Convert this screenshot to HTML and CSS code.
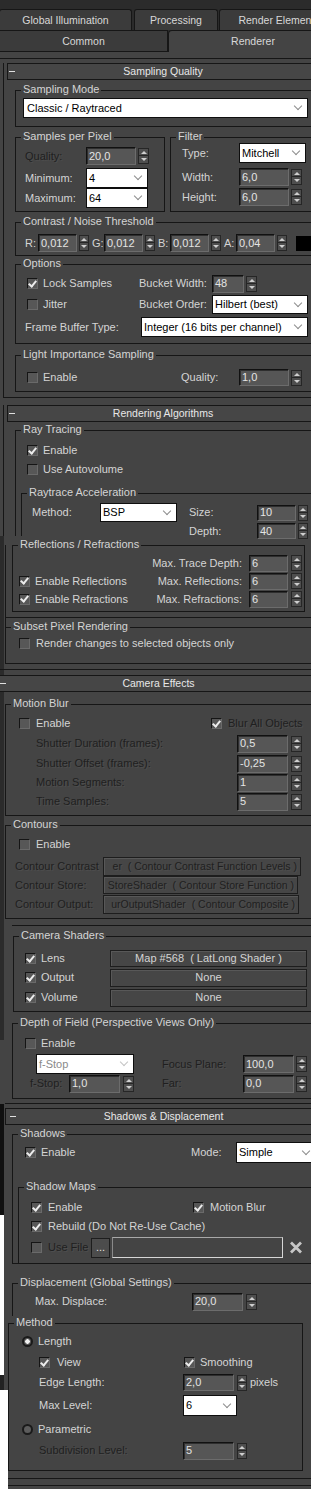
FILE: index.html
```html
<!DOCTYPE html>
<html lang="en">
<head>
    <meta charset="UTF-8">
    <meta name="viewport" content="width=device-width, initial-scale=1.0">
    <title>Render Setup - Renderer</title>
    <link rel="stylesheet" href="styles.css">
</head>
<body>
<div class="page">

    <!-- Tabs -->
    <div class="tabs">
        <div class="tab-row">
            <div class="tab t-gi">Global Illumination</div>
            <div class="tab t-proc">Processing</div>
            <div class="tab t-re">Render Elements</div>
        </div>
        <div class="tab-row">
            <div class="tab t-common">Common</div>
            <div class="tab t-renderer">Renderer</div>
        </div>
    </div>
    <div class="panel-line"></div>

    <!-- Sampling Quality -->
    <div class="roll r-sq">
        <div class="roll-head"><span class="dash"></span><span class="roll-title">Sampling Quality</span></div>

        <div class="grp open g-mode">
            <div class="grp-t">Sampling Mode</div>
            <div class="drop d-mode">Classic / Raytraced</div>
        </div>

        <div class="pair">
            <div class="grp g-spp">
                <div class="grp-t">Samples per Pixel</div>
                <div class="row r-quality">
                    <span class="lbl dis">Quality:</span>
                    <span class="field w50">20,0</span><span class="spin"></span>
                </div>
                <div class="row r-min">
                    <span class="lbl">Minimum:</span>
                    <span class="drop d-min">4</span>
                </div>
                <div class="row r-max">
                    <span class="lbl">Maximum:</span>
                    <span class="drop d-min">64</span>
                </div>
            </div>
            <div class="grp open g-filter">
                <div class="grp-t">Filter</div>
                <div class="row r-type">
                    <span class="lbl">Type:</span>
                    <span class="drop d-type">Mitchell</span>
                </div>
                <div class="row r-width">
                    <span class="lbl">Width:</span>
                    <span class="field w50">6,0</span><span class="spin"></span>
                </div>
                <div class="row r-height">
                    <span class="lbl">Height:</span>
                    <span class="field w50">6,0</span><span class="spin"></span>
                </div>
            </div>
        </div>

        <div class="grp open g-contrast">
            <div class="grp-t">Contrast / Noise Threshold</div>
            <div class="row r-rgba">
                <span class="c-lbl first">R:</span><span class="field w39">0,012</span><span class="spin sm"></span>
                <span class="c-lbl">G:</span><span class="field w39">0,012</span><span class="spin sm"></span>
                <span class="c-lbl">B:</span><span class="field w39">0,012</span><span class="spin sm"></span>
                <span class="c-lbl">A:</span><span class="field w39">0,04</span><span class="spin sm"></span>
                <span class="swatch"></span>
            </div>
        </div>

        <div class="grp open g-options">
            <div class="grp-t">Options</div>
            <div class="row r-lock">
                <span class="chk"><span class="cb on"></span>Lock Samples</span>
                <span class="lbl bw">Bucket Width:</span>
                <span class="field w32">48</span><span class="spin"></span>
            </div>
            <div class="row r-jitter">
                <span class="chk"><span class="cb"></span>Jitter</span>
                <span class="lbl bw">Bucket Order:</span>
                <span class="drop d-order">Hilbert (best)</span>
            </div>
            <div class="row r-fbt">
                <span class="lbl">Frame Buffer Type:</span>
                <span class="drop d-fbt">Integer (16 bits per channel)</span>
            </div>
        </div>

        <div class="grp open g-lis">
            <div class="grp-t">Light Importance Sampling</div>
            <div class="row r-lis">
                <span class="chk"><span class="cb"></span>Enable</span>
                <span class="lbl">Quality:</span>
                <span class="field w50 h17">1,0</span><span class="spin"></span>
            </div>
        </div>
    </div>

    <!-- Rendering Algorithms -->
    <div class="roll r-ra">
        <div class="roll-head"><span class="dash"></span><span class="roll-title">Rendering Algorithms</span></div>

        <div class="grp open nobot g-ray">
            <div class="grp-t">Ray Tracing</div>
            <div class="row r-en">
                <span class="chk"><span class="cb on"></span>Enable</span>
            </div>
            <div class="row r-auto">
                <span class="chk"><span class="cb"></span>Use Autovolume</span>
            </div>

            <div class="grp open nobot g-accel">
                <div class="grp-t">Raytrace Acceleration</div>
                <div class="row r-method">
                    <span class="lbl m">Method:</span>
                    <span class="drop d-method">BSP</span>
                    <span class="lbl sz">Size:</span>
                    <span class="field w39 h16">10</span><span class="spin sm"></span>
                </div>
                <div class="row r-depth">
                    <span class="lbl sz">Depth:</span>
                    <span class="field w39 h16">40</span><span class="spin sm"></span>
                </div>
            </div>
        </div>
    </div>

    <div class="pane-b">
        <div class="grp g-refl">
            <div class="grp-t">Reflections / Refractions</div>
            <div class="row r-mtd">
                <span class="lbl-r">Max. Trace Depth:</span>
                <span class="field w39 h17">6</span><span class="spin"></span>
            </div>
            <div class="row r-refl">
                <span class="chk"><span class="cb on"></span>Enable Reflections</span>
                <span class="lbl-r">Max. Reflections:</span>
                <span class="field w39 h17">6</span><span class="spin"></span>
            </div>
            <div class="row r-refr">
                <span class="chk"><span class="cb on"></span>Enable Refractions</span>
                <span class="lbl-r">Max. Refractions:</span>
                <span class="field w39 h17">6</span><span class="spin"></span>
            </div>
        </div>
        <div class="rule-b"></div>
        <div class="grp open noleft g-subset">
            <div class="grp-t">Subset Pixel Rendering</div>
            <div class="row r-subset">
                <span class="chk"><span class="cb m6"></span>Render changes to selected objects only</span>
            </div>
        </div>
    </div>
    <div class="rule-full"></div>

    <!-- Camera Effects -->
    <div class="roll-head h-cam"><span class="dash"></span><span class="roll-title">Camera Effects</span></div>

    <div class="pane-c">
        <div class="grp open g-mb">
            <div class="grp-t">Motion Blur</div>
            <div class="row r-mb1">
                <span class="chk en"><span class="cb m6"></span>Enable</span>
                <span class="chk"><span class="cb on m6"></span><span class="dis">Blur All Objects</span></span>
            </div>
            <div class="row r-sd">
                <span class="lbl dis">Shutter Duration (frames):</span>
                <span class="field w51">0,5</span><span class="spin m3"></span>
            </div>
            <div class="row r-so">
                <span class="lbl dis">Shutter Offset (frames):</span>
                <span class="field w51">-0,25</span><span class="spin m3"></span>
            </div>
            <div class="row r-ms">
                <span class="lbl dis">Motion Segments:</span>
                <span class="field w51">1</span><span class="spin m3"></span>
            </div>
            <div class="row r-ts">
                <span class="lbl dis">Time Samples:</span>
                <span class="field w51">5</span><span class="spin m3"></span>
            </div>
        </div>

        <div class="grp open g-cont">
            <div class="grp-t">Contours</div>
            <div class="row r-ce">
                <span class="chk"><span class="cb m6"></span>Enable</span>
            </div>
            <div class="row r-cc">
                <span class="lbl dis">Contour Contrast</span>
                <span class="btn clip dis b-cc">er  ( Contour Contrast Function Levels )</span>
            </div>
            <div class="row r-cs">
                <span class="lbl dis">Contour Store:</span>
                <span class="btn clip dis b-cs">StoreShader  ( Contour Store Function )</span>
            </div>
            <div class="row r-co">
                <span class="lbl dis">Contour Output:</span>
                <span class="btn clip dis b-co">urOutputShader  ( Contour Composite )</span>
            </div>
        </div>
    </div>

    <div class="rule-d"></div>
    <div class="grp open g-cs">
        <div class="grp-t">Camera Shaders</div>
        <div class="row r-lens">
            <span class="chk"><span class="cb on"></span>Lens</span>
            <span class="btn b-lens">Map #568  ( LatLong Shader )</span>
        </div>
        <div class="row r-out">
            <span class="chk"><span class="cb on"></span>Output</span>
            <span class="btn b-shader">None</span>
        </div>
        <div class="row r-vol">
            <span class="chk"><span class="cb on"></span>Volume</span>
            <span class="btn b-shader">None</span>
        </div>
    </div>

    <div class="grp open g-dof">
        <div class="grp-t">Depth of Field (Perspective Views Only)</div>
        <div class="row r-de">
            <span class="chk"><span class="cb"></span>Enable</span>
        </div>
        <div class="row r-fp">
            <span class="drop off d-fstop">f-Stop</span>
            <span class="lbl dis fp">Focus Plane:</span>
            <span class="field w51">100,0</span><span class="spin"></span>
        </div>
        <div class="row r-fs">
            <span class="lbl dis fs">f-Stop:</span>
            <span class="field w51">1,0</span><span class="spin m3"></span>
            <span class="lbl dis fp">Far:</span>
            <span class="field w51">0,0</span><span class="spin"></span>
        </div>
    </div>
    <div class="rule-e"></div>

    <!-- Shadows & Displacement -->
    <div class="roll-head h-sd"><span class="dash"></span><span class="roll-title">Shadows &amp; Displacement</span></div>

    <div class="grp open g-sh">
        <div class="grp-t">Shadows</div>
        <div class="row r-she">
            <span class="chk"><span class="cb on"></span>Enable</span>
            <span class="lbl mode">Mode:</span>
            <span class="drop d-shmode">Simple</span>
        </div>

        <div class="grp open nobot g-sm">
            <div class="grp-t">Shadow Maps</div>
            <div class="row r-sm1">
                <span class="chk first"><span class="cb on m6"></span>Enable</span>
                <span class="chk mb"><span class="cb on m6"></span>Motion Blur</span>
            </div>
            <div class="row r-reb">
                <span class="chk"><span class="cb on m6"></span>Rebuild (Do Not Re-Use Cache)</span>
            </div>
            <div class="row r-uf">
                <span class="chk uf"><span class="cb m6"></span><span class="dis">Use File</span></span>
                <span class="dots">...</span>
                <span class="path"></span>
                <span class="xbtn"><svg width="14" height="13" viewBox="0 0 14 13"><path d="M2 1.5l10 10M12 1.5l-10 10" stroke="#c6c6c6" stroke-width="2.8"/></svg></span>
            </div>
        </div>
    </div>

    <div class="grp open nobot g-disp">
        <div class="grp-t">Displacement (Global Settings)</div>
        <div class="row r-md">
            <span class="lbl">Max. Displace:</span>
            <span class="field w51">20,0</span><span class="spin m3"></span>
        </div>
    </div>

    <div class="grp g-meth">
        <div class="grp-t">Method</div>
        <div class="row r-len">
            <span class="chk opt"><span class="radio on"></span>Length</span>
        </div>
        <div class="row r-view">
            <span class="chk view"><span class="cb on m7"></span>View</span>
            <span class="chk"><span class="cb on"></span>Smoothing</span>
        </div>
        <div class="row r-el">
            <span class="lbl">Edge Length:</span>
            <span class="field w51 h17">2,0</span><span class="spin sm m3"></span>
            <span class="unit">pixels</span>
        </div>
        <div class="row r-ml">
            <span class="lbl">Max Level:</span>
            <span class="drop d-ml">6</span>
        </div>
        <div class="row r-par">
            <span class="chk opt"><span class="radio"></span>Parametric</span>
        </div>
        <div class="row r-sub">
            <span class="lbl dis">Subdivision Level:</span>
            <span class="field w51">5</span><span class="spin sm m3"></span>
        </div>
    </div>
    <div class="rule-f"></div>
    <div class="rule-g"></div>

</div>
</body>
</html>
```

FILE: styles.css
```css
* {
    box-sizing: border-box;
}
body {
    margin: 0;
    background: #444;
    font-family: "Liberation Sans", Arial, sans-serif;
    font-size: 11px;
    line-height: 13px;
    color: #d4d4d4;
}
.page {
    width: 311px;
    height: 1489px;
    overflow: hidden;
    /* left edge strips from the stitched screenshots */
    background:
        linear-gradient(to bottom, transparent 0 1390px, #fff 1390px) 0 0 / 8px 100% no-repeat,
        linear-gradient(to bottom, #444 0 536px, #2b2b2b 536px 1040px, #444 1040px 1104px,
            #101010 1104px 1215px, #fff 1215px 1375px, #222 1375px) 0 0 / 4px 100% no-repeat,
        #444;
}

/* Tabs */
.tabs {
    height: 52px;
    padding-top: 9px;
    background: #2b2b2b;
}
.tab-row {
    display: flex;
}
.tab {
    flex: none;
    height: 21px;
    display: flex;
    align-items: center;
    justify-content: center;
    white-space: nowrap;
    background: #3b3b3b;
    border: 1px solid #161616;
    border-bottom: 0;
    border-radius: 3px 3px 0 0;
    font-size: 10.5px;
    color: #d8d8d8;
}
.t-gi {
    width: 133px;
    margin-left: -1px;
}
.t-proc {
    width: 84px;
    margin-left: 2px;
}
.t-re {
    width: 120px;
    margin-left: 1px;
}
.t-common {
    width: 169px;
    height: 22px;
    margin-left: -1px;
    border-radius: 0;
    border-bottom: 1px solid #161616;
}
.t-renderer {
    width: 170px;
    height: 22px;
    background: #444;
    border-radius: 4px 0 0 0;
}
.panel-line {
    margin-top: 6px;
    border-top: 1px solid #161616;
}

/* Rollouts */
.roll {
    margin-left: 3px;
    border-left: 1px solid #161616;
}
.r-sq {
    margin-top: 4px;
    padding-bottom: 5px;
    border-bottom: 1px solid #161616;
}
.r-ra {
    margin-top: 7px;
}
.roll-head {
    display: flex;
    align-items: center;
    height: 17px;
    margin-left: 3px;
    background: #464646;
    border: 1px solid #161616;
    border-right: 0;
    font-size: 10.5px;
    color: #e8e8e8;
}
.dash {
    flex: none;
    width: 6px;
    height: 1px;
    margin-left: 1px;
    background: #e0e0e0;
}
.roll-title {
    flex: 1;
    text-align: center;
    white-space: nowrap;
}
.h-cam {
    margin: 5px 0 0 0;
    border-left: 0;
}
.h-cam .dash {
    margin-left: 0;
}
.h-sd {
    margin: 4px 0 0 5px;
}
.h-sd .dash {
    margin-left: 4px;
}

/* Group boxes */
.grp {
    flex: none;
    border: 1px solid #161616;
}
.grp.open {
    border-right: 0;
}
.grp.nobot {
    border-bottom: 0;
}
.grp.noleft {
    border-left: 0;
}
.grp-t {
    display: table;
    margin: -8px 0 0 5px;
    padding: 0 2px;
    background: #444;
    white-space: nowrap;
}

/* Controls */
.row {
    display: flex;
    align-items: center;
}
.lbl {
    flex: none;
    white-space: nowrap;
}
.lbl-r {
    flex: 1;
    text-align: right;
    padding-right: 7px;
    white-space: nowrap;
}
.dis {
    color: #1f1f1f;
    text-shadow: 1px 1px 0 #4e4e4e;
}
.field {
    flex: none;
    height: 18px;
    display: flex;
    align-items: center;
    padding-left: 2px;
    background: #565656;
    color: #e4e4e4;
    border: 1px solid;
    border-color: #111 #6c6c6c #6c6c6c #111;
    box-shadow: inset 1px 1px 0 #2e2e2e;
    white-space: nowrap;
}
.field.h17 { height: 17px; }
.field.h16 { height: 16px; }
.w32 { width: 32px; }
.w39 { width: 39px; }
.w50 { width: 50px; }
.w51 { width: 51px; }
.spin {
    flex: none;
    width: 11px;
    height: 16px;
    margin-left: 2px;
    display: flex;
    flex-direction: column;
    align-items: center;
    justify-content: space-around;
    background: #4e4e4e linear-gradient(transparent 6px, #262626 6px 7px, transparent 7px);
    border: 1px solid #262626;
}
.spin::before {
    content: "";
    border: 3px solid transparent;
    border-top: 0;
    border-bottom: 3px solid #cfcfcf;
}
.spin::after {
    content: "";
    border: 3px solid transparent;
    border-bottom: 0;
    border-top: 3px solid #cfcfcf;
}
.spin.sm { width: 10px; }
.spin.m3 { margin-left: 3px; }
.drop {
    flex: none;
    display: flex;
    align-items: center;
    height: 20px;
    padding-left: 2px;
    background: #fff;
    color: #000;
    border: 1px solid #0e0e0e;
    white-space: nowrap;
    overflow: hidden;
}
.drop::after {
    content: "";
    flex: none;
    margin-left: auto;
    margin-right: 6px;
    width: 5px;
    height: 5px;
    border-right: 1.5px solid #8c8c8c;
    border-bottom: 1.5px solid #8c8c8c;
    transform: translateY(-2px) rotate(45deg);
}
.drop.off {
    color: #8a8a8a;
}
.drop.off::after {
    border-color: #c4c4c4;
}
.chk {
    flex: none;
    display: flex;
    align-items: center;
    white-space: nowrap;
}
.cb {
    flex: none;
    width: 11px;
    height: 11px;
    margin-right: 5px;
    display: flex;
    align-items: center;
    justify-content: center;
    background: #575757;
    border: 1px solid;
    border-color: #151515 #6a6a6a #6a6a6a #151515;
}
.cb.on::after {
    content: "";
    width: 3px;
    height: 6px;
    border: solid #ececec;
    border-width: 0 2px 2px 0;
    transform: translateY(-1px) rotate(40deg);
}
.cb.m6 { margin-right: 6px; }
.cb.m7 { margin-right: 7px; }
.radio {
    flex: none;
    width: 11px;
    height: 11px;
    margin-right: 5px;
    border-radius: 50%;
    border: 2px solid #1a1a1a;
    background: #5c5c5c;
}
.radio.on {
    background: radial-gradient(circle, #f0f0f0 0 2px, #5c5c5c 2.5px);
}
.btn {
    flex: none;
    display: flex;
    align-items: center;
    justify-content: center;
    height: 18px;
    background: #464646;
    border: 1px solid #1d1d1d;
    box-shadow: inset 1px 1px 0 #585858;
    white-space: pre;
    overflow: hidden;
}
.btn.clip {
    justify-content: flex-end;
    padding-right: 3px;
    font-size: 10.5px;
}
.swatch {
    flex: none;
    width: 16px;
    height: 15px;
    margin-left: 9px;
    background: #000;
}

/* Sampling Quality */
.g-mode {
    height: 37px;
    margin: 10px 0 0 11px;
}
.d-mode {
    width: 285px;
    margin: 2px 0 0 7px;
    padding-left: 3px;
}
.pair {
    display: flex;
    margin: 10px 0 0 11px;
}
.g-spp {
    width: 150px;
    height: 75px;
}
.g-spp .lbl {
    margin-left: 9px;
    width: 61px;
}
.r-quality { margin-top: 3px; height: 20px; }
.r-min { margin-top: 2px; height: 20px; }
.r-max { height: 20px; }
.d-min { width: 62px; }
.g-filter {
    width: 146px;
    height: 75px;
    margin-left: 5px;
}
.g-filter .lbl {
    margin-left: 11px;
    width: 57px;
}
.r-type { height: 20px; }
.r-width { margin-top: 4px; height: 20px; }
.r-height { height: 20px; }
.d-type { width: 67px; }
.g-contrast {
    height: 34px;
    margin: 10px 0 0 11px;
}
.r-rgba {
    margin-top: 6px;
    height: 18px;
}
.c-lbl {
    flex: none;
    width: 12px;
    margin-left: 3px;
}
.c-lbl.first {
    width: 13px;
    margin-left: 9px;
}
.g-options {
    height: 80px;
    margin: 8px 0 0 11px;
}
.g-options .chk {
    margin-left: 11px;
    width: 112px;
}
.lbl.bw { width: 73px; }
.r-lock { margin-top: 4px; height: 19px; }
.r-jitter { margin-top: 2px; height: 19px; }
.d-order { width: 96px; height: 19px; }
.r-fbt { margin-top: 3px; height: 20px; }
.r-fbt .lbl {
    margin-left: 9px;
    width: 116px;
}
.d-fbt { width: 167px; }
.g-lis {
    height: 37px;
    margin: 11px 0 0 11px;
}
.r-lis { margin-top: 7px; height: 19px; }
.r-lis .chk {
    margin-left: 11px;
    width: 154px;
}
.r-lis .lbl { width: 58px; }

/* Rendering Algorithms */
.g-ray {
    height: 106px;
    margin: 8px 0 0 11px;
}
.g-ray > .row .chk { margin-left: 11px; }
.r-en { margin-top: 5px; height: 19px; }
.r-auto { height: 19px; }
.g-accel {
    height: 43px;
    margin: 14px 0 0 5px;
}
.r-method { margin-top: 4px; height: 19px; }
.r-depth { height: 18px; }
.lbl.m {
    margin-left: 10px;
    width: 68px;
}
.d-method { width: 77px; height: 19px; }
.lbl.sz {
    margin-left: 12px;
    width: 68px;
}
.r-depth .lbl.sz { margin-left: 167px; }
.pane-b {
    margin-left: 5px;
    border-left: 1px solid #161616;
}
.g-refl {
    width: 293px;
    height: 67px;
    margin: 9px 0 0 6px;
}
.g-refl .chk { margin-left: 6px; }
.g-refl .spin { margin: 0 2px 0 3px; }
.r-mtd { margin-top: 3px; height: 18px; }
.r-refl, .r-refr { height: 18px; }
.rule-b {
    margin-top: 5px;
    border-top: 1px solid #161616;
}
.g-subset {
    height: 37px;
    margin-top: 9px;
}
.r-subset { margin-top: 1px; height: 19px; }
.r-subset .chk { margin-left: 13px; }
.rule-full {
    margin-top: 5px;
    border-top: 1px solid #161616;
}

/* Camera Effects */
.pane-c {
    margin-left: 5px;
}
.g-mb {
    height: 112px;
    margin-top: 12px;
}
.r-mb1 { margin-top: 4px; height: 19px; }
.r-mb1 .chk.en {
    margin-left: 13px;
    width: 192px;
}
.g-mb .lbl {
    margin-left: 30px;
    width: 201px;
}
.r-sd, .r-so { margin-top: 1px; height: 19px; }
.r-ms, .r-ts { height: 19px; }
.g-cont {
    height: 94px;
    margin-top: 9px;
}
.r-ce { margin-top: 4px; height: 19px; }
.r-ce .chk { margin-left: 13px; }
.g-cont .lbl {
    margin-left: 9px;
    width: 88px;
}
.r-cc { margin-top: 3px; height: 19px; }
.r-cs { height: 18px; }
.r-co { margin-top: 1px; height: 19px; }
.b-cc { width: 198px; height: 19px; }
.b-cs { width: 195px; }
.b-co { width: 196px; height: 19px; }
.rule-d {
    margin: 6px 0 0 12px;
    border-top: 1px solid #161616;
}
.g-cs {
    height: 76px;
    margin: 10px 0 0 13px;
}
.g-cs .chk {
    margin-left: 11px;
    width: 85px;
}
.r-lens { margin-top: 7px; height: 19px; }
.r-out { height: 19px; }
.r-vol { margin-top: 1px; height: 19px; }
.b-lens { width: 197px; height: 17px; }
.b-shader { width: 197px; }
.g-dof {
    height: 76px;
    margin: 11px 0 0 12px;
}
.r-de { margin-top: 5px; height: 19px; }
.r-de .chk { margin-left: 12px; }
.r-fp { margin-top: 1px; height: 20px; }
.d-fstop {
    width: 98px;
    margin-left: 23px;
}
.lbl.fp {
    margin-left: 28px;
    width: 81px;
}
.r-fs { height: 19px; }
.lbl.fs {
    margin-left: 17px;
    width: 39px;
}
.rule-e {
    margin: 4px 0 0 5px;
    border-top: 1px solid #161616;
}

/* Shadows & Displacement */
.g-sh {
    height: 130px;
    margin: 9px 0 0 12px;
}
.r-she { margin-top: 2px; height: 21px; }
.r-she .chk {
    margin-left: 12px;
    width: 166px;
}
.lbl.mode { width: 45px; }
.d-shmode { width: 80px; height: 21px; }
.g-sm {
    height: 76px;
    margin: 24px 0 0 5px;
}
.g-sm .chk { margin-left: 12px; }
.g-sm .chk.first { width: 162px; }
.g-sm .chk.mb { margin-left: 0; }
.g-sm .chk.uf { width: 60px; }
.r-sm1 { margin-top: 5px; height: 19px; }
.r-reb { height: 19px; }
.r-uf { margin-top: 1px; height: 21px; }
.dots {
    flex: none;
    width: 19px;
    height: 20px;
    display: flex;
    align-items: center;
    justify-content: center;
    background: #4c4c4c;
    border: 1px solid #1d1d1d;
    color: #e0e0e0;
}
.path {
    flex: none;
    width: 171px;
    height: 21px;
    margin-left: 2px;
    border: 1px solid #d6d6d6;
    border-left-color: #8a8a8a;
    border-top-color: #a8a8a8;
}
.xbtn {
    flex: none;
    width: 21px;
    height: 20px;
    margin-left: 2px;
    display: flex;
    align-items: center;
    justify-content: center;
}
.g-disp {
    height: 33px;
    margin: 19px 0 0 12px;
}
.r-md { margin-top: 3px; height: 19px; }
.g-disp .lbl {
    margin-left: 22px;
    width: 157px;
}
.g-meth {
    width: 295px;
    height: 148px;
    margin: 7px 0 0 8px;
}
.g-meth .lbl {
    margin-left: 30px;
    width: 144px;
}
.g-meth .chk.opt { margin-left: 13px; }
.g-meth .chk.view {
    margin-left: 30px;
    width: 145px;
}
.r-len { margin-top: 3px; height: 19px; }
.r-view { margin-top: 2px; height: 19px; }
.r-el { margin-top: 1px; height: 19px; }
.r-ml { margin-top: 3px; height: 21px; }
.d-ml { width: 54px; height: 21px; }
.r-par { margin-top: 4px; height: 19px; }
.r-sub { margin-top: 2px; height: 19px; }
.unit {
    margin-left: 3px;
}
.rule-f {
    margin: 7px 0 0 8px;
    border-top: 1px solid #161616;
}
.rule-g {
    margin: 6px 0 0 8px;
    border-top: 1px solid #161616;
}
```
